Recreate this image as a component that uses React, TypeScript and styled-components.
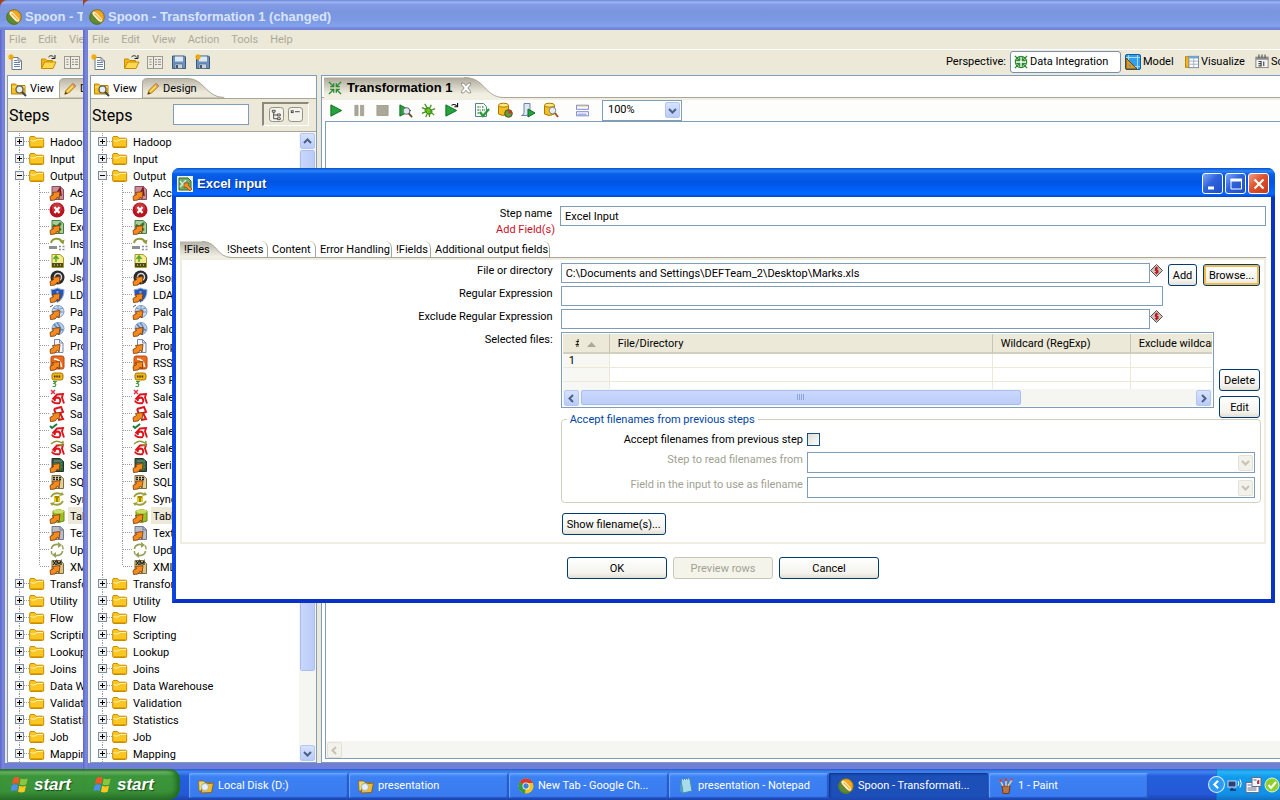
import React from "react";
import styled, { createGlobalStyle, css } from "styled-components";

const UI = `Roboto, "Open Sans", "Liberation Sans", sans-serif`;
const TITLE = `"Liberation Sans", Roboto, sans-serif`;
const BEIGE = "#ece9d8";
const LINE = "#7f9db9";
const MUTED = "#aca899";

const Global = createGlobalStyle`
  *, *::before, *::after { box-sizing: border-box; }
  body { margin: 0; background: #a3421f; color: #000; font: 11px/14px ${UI}; }
  button, input, select { font: inherit; color: inherit; margin: 0; }
  svg { display: block; flex: none; }
`;

/* ---------- Page and window frame ---------- */

const Screen = styled.div`
  display: grid;
  grid-template-columns: 83px minmax(0, 1fr);
  min-height: 100vh;
`;

const Desktop = styled.section`
  position: relative;
  display: flex;
  flex-direction: column;
  min-width: 0;
  overflow: hidden;
`;

const Frame = styled.div`
  flex: 1;
  display: flex;
  flex-direction: column;
  padding: 0 0 6px 5px;
  border-radius: 8px 0 0 0;
  background: linear-gradient(90deg, #5a66cf 0, #7b88dc 3px, #6f7ed6 5px);
`;

const TitleBar = styled.header`
  height: 30px;
  margin-left: -5px;
  padding: 4px 0 0 6px;
  display: flex;
  align-items: center;
  gap: 3px;
  border-radius: 8px 0 0 0;
  background: linear-gradient(#6a83d8 0, #9db5f2 2px, #8199e2 5px, #7a96df 12px, #7c98e2 20px, #82a3ee 26px, #7489d8 28px, #6f7ed6 30px);
  color: #d8e4fb;
  white-space: nowrap;
`;

const TitleText = styled.h1`
  margin: 0;
  min-width: 0;
  overflow: hidden;
  font: bold 13px/16px ${TITLE};
`;

const Chrome = styled.div`
  flex: 1;
  display: flex;
  flex-direction: column;
  background: ${BEIGE};
`;

const MenuBar = styled.nav`
  height: 20px;
  padding: 2px 4px;
  display: flex;
  gap: 12px;
  border-bottom: 1px solid #fff;
  color: ${MUTED};
  white-space: nowrap;
`;

const MenuItem = styled.button`
  padding: 0;
  border: 0;
  background: none;
  line-height: 15px;
`;

const ToolRow = styled.div`
  height: 25px;
  padding: 0 0 2px 3px;
  display: flex;
  align-items: center;
  overflow: hidden;
`;

const IconButton = styled.button<{ $w?: number }>`
  flex: none;
  width: ${(p) => p.$w ?? 24}px;
  height: 22px;
  padding: 0;
  border: 0;
  background: none;
  display: grid;
  place-items: center start;
`;

const Perspectives = styled.div`
  flex: none;
  width: 334px;
  height: 23px;
  margin-left: auto;
  display: flex;
  align-items: center;
  overflow: hidden;
  white-space: nowrap;
`;

const PerspectiveLabel = styled.span`
  flex: none;
  width: 64px;
`;

const Perspective = styled.button<{ $on?: boolean; $w: number }>`
  flex: none;
  width: ${(p) => p.$w}px;
  height: 22px;
  padding: 0 3px;
  display: flex;
  align-items: center;
  gap: 2px;
  border: 1px solid ${(p) => (p.$on ? "#7a8fae" : "transparent")};
  border-radius: 3px;
  background: ${(p) => (p.$on ? "#fff" : "none")};
`;

const Panes = styled.div`
  flex: 1;
  display: flex;
  gap: 4px;
  padding-left: 2px;
`;

/* ---------- Steps pane ---------- */

const StepsPane = styled.div`
  flex: none;
  width: 227px;
  display: flex;
  flex-direction: column;
  border: 1px solid ${LINE};
`;

const TabStrip = styled.div`
  height: 23px;
  padding-left: 3px;
  display: flex;
  align-items: end;
  background: #fff;
  border-bottom: 1px solid #aaa697;
`;

const PaneTab = styled.button<{ $w: number }>`
  position: relative;
  flex: none;
  width: ${(p) => p.$w}px;
  height: 20px;
  padding: 2px 0 0;
  display: flex;
  align-items: center;
  gap: 3px;
  border: 0;
  background: none;

  & > * { position: relative; }
`;

const TabShape = styled.svg`
  && { position: absolute; inset: 0 auto auto 0; }
`;

const StepsBar = styled.div`
  height: 33px;
  padding: 3px 7px 4px 1px;
  display: flex;
  align-items: center;
  border-bottom: 1px solid #aaa697;
`;

const StepsTitle = styled.h2`
  margin: 0;
  padding-top: 2px;
  width: 81px;
  font: 16px/20px ${UI};
`;

const SearchBox = styled.input`
  width: 76px;
  height: 21px;
  border: 1px solid ${LINE};
  background: #fff;
`;

const ModeGroup = styled.div`
  margin: 0 0 2px 13px;
  width: 47px;
  height: 24px;
  display: flex;
  align-items: center;
  justify-content: space-evenly;
  border: 1px solid #fff;
  border-top: 2px solid #8c897c;
  border-left: 2px solid #8c897c;
`;

const TreeArea = styled.div`
  flex: 1;
  display: flex;
  justify-content: space-between;
  background: #fff;
`;

const Tree = styled.ul`
  margin: 0;
  padding: 1px 0 0 1px;
  list-style: none;
  white-space: nowrap;
`;

const TreeRow = styled.li`
  height: 17px;
  display: flex;
  align-items: center;
`;

const TreeText = styled.span<{ $hot?: boolean }>`
  margin-left: 3px;
  padding: 2px 2px 0;
  line-height: 15px;
  background: ${(p) => (p.$hot ? BEIGE : "none")};
`;

const Toggle = styled.button`
  padding: 0;
  border: 0;
  background: none;
`;

/* ---------- Scroll bars ---------- */

const VTrack = styled.div`
  flex: none;
  width: 17px;
  padding: 1px;
  display: flex;
  flex-direction: column;
  gap: 1px;
  background: #f5f5f1;
`;

const VThumb = styled.div`
  height: 83%;
  border: 1px solid #fff;
  outline: 1px solid #a9bdf0;
  outline-offset: -1px;
  border-radius: 2px;
  background: linear-gradient(90deg, #c9d7fc, #b9cbf8);
`;

const HTrack = styled.div`
  height: 17px;
  padding: 1px;
  display: flex;
  gap: 2px;
  background: #f5f5f1;
`;

const HThumb = styled.div`
  width: 68%;
  display: grid;
  place-items: center;
  border: 1px solid #a9bdf0;
  border-radius: 2px;
  background: linear-gradient(#cad8fd, #bccdfa);
`;

const arrowBox = css<{ $off?: boolean }>`
  flex: none;
  width: 15px;
  height: 16px;
  padding: 0;
  display: grid;
  place-items: center;
  border: 1px solid ${(p) => (p.$off ? "#e4e2d8" : "#b5c6f0")};
  border-radius: 2px;
  background: ${(p) => (p.$off ? "#f2f1ea" : "linear-gradient(#d6e2fe, #b9cbf8)")};
  color: ${(p) => (p.$off ? "#c5c3b6" : "#4d6185")};
`;
const ArrowButton = styled.button<{ $off?: boolean; $end?: boolean }>`
  ${arrowBox}
  ${(p) => p.$end && "margin-left: auto;"}
`;
const ArrowEndV = styled(ArrowButton)`
  margin-top: auto;
`;
const ArrowMark = styled.span<{ $off?: boolean }>`
  ${arrowBox}
`;

/* ---------- Editor pane ---------- */

const EditorPane = styled.main`
  flex: 1;
  min-width: 0;
  display: flex;
  flex-direction: column;
  border: 1px solid ${LINE};
  border-right: 0;
  background: #fff;
`;

const EditorTabs = styled.div`
  height: 22px;
  padding: 1px 0 0 2px;
  background: #fff;
  border-bottom: 1px solid #aaa697;
`;

const EditorTab = styled.div`
  position: relative;
  width: 182px;
  height: 21px;
  padding-left: 4px;
  display: flex;
  align-items: center;
  gap: 5px;
  font: bold 13px/16px ${TITLE};

  & > * { position: relative; }
`;

const CloseButton = styled.button`
  padding: 0;
  margin-left: 3px;
  border: 0;
  background: none;
`;

const EditorTools = styled.div`
  height: 23px;
  padding: 0 0 1px 7px;
  display: flex;
  align-items: center;
  border-top: 2px solid #f1efe2;
  background: #fdfdfb;
`;

const ToolGap = styled.span<{ $w: number }>`
  flex: none;
  width: ${(p) => p.$w}px;
`;

const Canvas = styled.div`
  flex: 1;
  margin: 0 0 3px 3px;
  display: flex;
  flex-direction: column;
  justify-content: end;
  border: 1px solid ${LINE};
  border-right: 0;
`;

/* ---------- Form parts ---------- */

const SelectBox = styled.span<{ $w?: string }>`
  width: ${(p) => p.$w ?? "100%"};
  height: 21px;
  padding: 1px;
  display: flex;
  align-items: center;
  border: 1px solid ${LINE};
  background: #fff;
`;

const PlainSelect = styled.select`
  flex: 1;
  min-width: 0;
  padding: 0 4px;
  border: 0;
  appearance: none;
  background: none;
`;

const TextBox = styled.input`
  flex: 1;
  min-width: 0;
  height: 20px;
  padding: 1px 4px 0;
  border: 1px solid ${LINE};
  background: #fff;
`;

const Button = styled.button<{ $w: number; $focus?: boolean }>`
  flex: none;
  width: ${(p) => p.$w}px;
  height: 22px;
  padding: 2px 0 0;
  border: 1px solid #003c74;
  border-radius: 3px;
  background: linear-gradient(#fff, #f4f3ee 75%, #e3dfd3);
  white-space: nowrap;
  ${(p) => p.$focus && "box-shadow: inset 0 0 0 2px #f3b949;"}

  &:disabled {
    border-color: #c9c7ba;
    background: #f5f4ea;
    color: #a1a192;
  }
`;

/* ---------- Dialog ---------- */

const Dialog = styled.div`
  position: absolute;
  top: 168px;
  left: 89px;
  right: 5px;
  border: 4px solid #0831c8;
  border-top: 0;
  border-left-color: #0b45dd;
  border-radius: 8px 8px 0 0;
  background: #fff;
`;

const DialogTitle = styled.header`
  height: 29px;
  margin: 0 -4px;
  padding: 2px 6px 0 5px;
  display: flex;
  align-items: center;
  gap: 2px;
  border-radius: 7px 7px 0 0;
  background: linear-gradient(#0a4fd0 0, #2b85f8 3px, #0a5fe8 6px, #0054e3 14px, #0062fb 22px, #0467ff 26px, #0045c8 29px);
  color: #fff;
`;

const DialogHeading = styled(TitleText)`
  flex: 1;
  margin-left: 2px;
  text-shadow: 1px 1px 0 #0a2f87;
`;

const CaptionButton = styled.button<{ $close?: boolean }>`
  width: 21px;
  height: 21px;
  padding: 0;
  display: grid;
  place-items: center;
  border: 1px solid #fff;
  border-radius: 3px;
  background: ${(p) =>
    p.$close
      ? "linear-gradient(135deg, #f0a088, #e0502c 45%, #c63a17)"
      : "linear-gradient(135deg, #7fa6f5, #2f62dd 45%, #1f4fc6)"};
`;

const DialogBody = styled.form`
  padding: 9px 5px 20px 4px;
`;

const Field = styled.div<{ $min?: number }>`
  display: grid;
  grid-template-columns: 35% minmax(0, 1fr);
  align-items: start;
  min-height: ${(p) => p.$min ?? 23}px;
`;

const Caption = styled.label<{ $off?: boolean; $near?: boolean; $head?: boolean }>`
  padding: ${(p) => (p.$head ? 0 : 1)}px ${(p) => (p.$near ? 4 : 8)}px 0 0;
  text-align: right;
  color: ${(p) => (p.$off ? "#a1a192" : "inherit")};
`;

const HeadCaptions = styled.div`
  display: flex;
  flex-direction: column;
  line-height: 16px;
`;

const AddField = styled.span`
  padding-right: 5px;
  text-align: right;
  color: #c8102a;
`;

const Tabs = styled.div`
  margin-top: 3px;
  height: 17px;
  display: flex;
  border-bottom: 1px solid #aaa697;
`;

const ActiveTab = styled.button`
  position: relative;
  width: 43px;
  padding: 2px 0 0 4px;
  border: 0;
  background: none;
  text-align: left;

  & > * { position: relative; }
`;

const Tab = styled.button<{ $w: number }>`
  width: ${(p) => p.$w}px;
  padding: 2px 0 0 4px;
  border: 0;
  border-right: 1px solid #aaa697;
  border-top-right-radius: 7px;
  background: none;
  text-align: left;
  white-space: nowrap;
`;

const TabPage = styled.div`
  padding: 3px 0 7px;
  border: 2px solid #efede1;
`;

const Controls = styled.div<{ $right?: number }>`
  display: flex;
  align-items: start;
  padding-right: ${(p) => p.$right ?? 4}px;
`;

const ButtonSlot = styled.div`
  display: flex;
  gap: 6px;
  padding: 1px 0 0 5px;
`;

const VarIcon = styled.svg`
  margin-top: 1px;
`;

const GridBox = styled.div`
  flex: 1;
  min-width: 0;
  height: 76px;
  padding: 1px;
  display: flex;
  flex-direction: column;
  border: 1px solid ${LINE};
`;

const GridView = styled.div`
  flex: 1;
  min-height: 0;
  overflow: hidden;
`;

const FileTable = styled.table`
  width: 780px;
  table-layout: fixed;
  border-collapse: separate;
  border-spacing: 0;

  th {
    height: 20px;
    padding: 2px 8px 0;
    background: ${BEIGE};
    border-bottom: 2px solid #d3cfbd;
    border-right: 1px solid #c9c5b3;
    font-weight: normal;
    text-align: left;
  }
  td {
    height: 14px;
    padding: 0 6px;
    line-height: 13px;
    border-right: 1px solid ${BEIGE};
    border-bottom: 1px solid ${BEIGE};
  }
  td:first-child { background: #f7f7f4; }
`;

const SortHead = styled.div`
  display: flex;
  align-items: center;
  gap: 8px;
  padding-left: 4px;
`;

const Hash = styled.span`
  width: 4px;
  overflow: hidden;
`;

const SideButtons = styled.div`
  padding: 37px 0 0 5px;
  display: flex;
  flex-direction: column;
  gap: 5px;
`;

const Group = styled.fieldset`
  margin: -6px 3px 0 0;
  padding: 7px 5px 4px 4px;
  min-width: 0;
  border: 1px solid #d0d0bf;
  border-radius: 4px;
`;

const Legend = styled.legend`
  margin-left: 1px;
  padding: 1px 3px 0;
  line-height: 13px;
  color: #0046a5;
`;

const CheckBox = styled.input`
  width: 13px;
  height: 13px;
  appearance: none;
  border: 1px solid #1c5180;
  background: linear-gradient(135deg, #dcdcd7, #fff);
`;

const ShowRow = styled.div`
  padding: 10px 0 0 1px;
`;

const DialogButtons = styled.div`
  padding-top: 13px;
  display: flex;
  justify-content: center;
  gap: 6px;
`;

/* ---------- Task bar ---------- */

const TaskBar = styled.footer`
  height: 31px;
  display: flex;
  align-items: stretch;
  background: linear-gradient(#2a5bd0 0, #3f87f2 3px, #245edb 7px, #2459d8 25px, #1c44ac 31px);
  color: #fff;
`;

const StartButton = styled.button`
  flex: none;
  width: 97px;
  padding: 0 0 0 10px;
  display: flex;
  align-items: center;
  gap: 4px;
  border: 0;
  border-radius: 0 10px 12px 0;
  background: linear-gradient(#2c6e2c 0, #6cb668 3px, #3b963a 7px, #3a9238 22px, #2a6f29 31px);
  box-shadow: inset -4px 0 5px #1f6a24;
  color: #fff;
  font: italic bold 17px/20px ${TITLE};
  text-shadow: 1px 1px 1px #1d4a1d;
`;

const TaskList = styled.div`
  flex: 1;
  min-width: 0;
  padding: 4px 0 2px 9px;
  display: flex;
  gap: 1px;
`;

const Task = styled.button<{ $on?: boolean }>`
  flex: 0 1 159px;
  min-width: 0;
  padding: 0 8px 0 9px;
  display: flex;
  align-items: center;
  gap: 4px;
  border: 0;
  border-radius: 2px;
  background: ${(p) => (p.$on ? "#1c4fb8" : "linear-gradient(#5a9bff 0, #3c81f3 4px, #3a7bf0)")};
  box-shadow: ${(p) => (p.$on ? "inset 1px 1px 2px #0f327f" : "inset 1px 1px 1px #6ea8fb, inset -1px -1px 1px #2457c4")};
  white-space: nowrap;
`;

const Tray = styled.div`
  flex: none;
  width: 72px;
  display: flex;
  align-items: center;
  gap: 2px;
  overflow: hidden;
  background: linear-gradient(90deg, transparent 8px, #0f55b8 8px, transparent 9px),
    linear-gradient(#1589de 0, #28b3f5 3px, #129aee 8px, #1290e8 25px, #1072c4 31px) 8px 0 no-repeat;
`;

/* ---------- Icons ---------- */

type SvgProps = { children: React.ReactNode; w?: number; h?: number; box?: string };
const Svg = ({ children, w = 16, h = 16, box }: SvgProps) => (
  <svg width={w} height={h} viewBox={box ?? "0 0 16 16"} fill="none" aria-hidden="true">
    {children}
  </svg>
);

const SpoonLogo = () => (
  <Svg>
    <circle cx="8" cy="8" r="7.5" fill="#f4a31c" />
    <path d="M2.5 3A7.5 7.5 0 0 0 12 14.5L3.5 3Z" fill="#5d8a32" />
    <path d="M4.500 1.500Q13 2 14.500 11Q15 13 12.500 12.500Q4 9 3.500 3Z" fill="#f7a81f" />
    <path d="M3.500 3.500Q5 1.500 8 4.500L12.500 9.500Q14 12 12 12.500Q10.500 13 8.500 11L4.500 6.500Q3 5 3.500 3.500Z" fill="#fff3d0" />
    <path d="M5.500 4.500 12 11" stroke="#f0b244" strokeWidth="1.200" />
    <circle cx="8" cy="8" r="7.300" stroke="#4d6a2d" strokeWidth=".8" />
  </Svg>
);

const Spark = () => <path d="M0 3h6M3 0v6M1 1l4 4M5 1 1 5" stroke="#f2a900" strokeWidth="1.200" />;

const NewFile = () => (
  <Svg>
    <path d="M4 3.500h6l3.500 3.500v8.500H4Z" fill="#fff" stroke="#6b7689" />
    <path d="M10 3.500V7h3.500" stroke="#6b7689" />
    <path d="M6 8.500h6M6 10.500h6M6 12.500h6M6 6.500h3" stroke="#6a83ad" />
    <Spark />
  </Svg>
);
const OpenFolder = () => (
  <Svg w={17}>
    <path d="M1 14V5h4l1.500 1.500H12V8" fill="#f3b61d" stroke="#c88a00" />
    <path d="M1 14.500 4 8h11.500l-3 6.500Z" fill="#ffd84d" stroke="#c88a00" />
    <path d="M8 3c2-2 4-1.500 5.500.5M14.500 1v3.500H11" stroke="#222" />
  </Svg>
);
const ListIcon = () => (
  <Svg>
    <rect x=".5" y="2.500" width="15" height="12" fill="#eeece2" stroke="#9c9a8e" />
    <path d="M6.500 2.500v12M2.500 5.500h2M2.500 8h2M2.500 10.500h2M8 5.500h2m1 0h3M8 8h2m1 0h3M8 10.500h2m1 0h3" stroke="#8f8d82" />
  </Svg>
);
const Floppy = ({ star }: { star?: boolean }) => (
  <Svg>
    <path d="M1.500 2h12l1 1v11.500h-13Z" fill="#6d93bd" stroke="#3b587c" />
    <rect x="4" y="2.500" width="8" height="5" fill="#dfe9f3" />
    <rect x="4" y="10" width="7.500" height="4.500" fill="#c8d2dc" stroke="#4a627f" strokeWidth=".6" />
    <rect x="5" y="11" width="2" height="3" fill="#3b587c" />
    {star && <Spark />}
  </Svg>
);
const Folder = () => (
  <Svg>
    <path d="M.7 12V3.700Q.7 2.500 2 2.500h3.500L7 4.200h6.500q1.200 0 1.200 1.200V12q0 1.500-1.300 1.500H2Q.7 13.500.7 12Z" fill="#f9c623" stroke="#c68d00" />
    <path d="M1.500 6.500Q6 8 8 5.500h6" stroke="#fff0a8" strokeWidth="1.200" />
    <path d="M1.500 12.500h12" stroke="#e0a100" />
  </Svg>
);
const ViewIcon = () => (
  <Svg>
    <path d="M.5 13V3h4l1.500 1.500h8V13Z" fill="#f6bf25" stroke="#b98300" />
    <path d="M1 6h13" stroke="#ffe58a" />
    <circle cx="8.500" cy="8.500" r="3.500" fill="#e3eef8" stroke="#555" strokeWidth="1.200" />
    <path d="m11 11 4 4" stroke="#444" strokeWidth="2" />
  </Svg>
);
const Pencil = () => (
  <Svg w={14} h={14}>
    <path d="M2 14 3.500 9.500 11.500 1.500l3 3L6.500 12.500Z" fill="#f7c433" stroke="#a8690b" />
    <path d="m10 3 3 3 1.500-1.500-3-3Z" fill="#d98a7a" />
    <path d="M2 14 3 11l2 2Z" fill="#333" />
    <path d="m5 11 6.500-6.500" stroke="#fff2b0" />
  </Svg>
);
const ModeTree = () => (
  <Svg w={15} h={15}>
    <rect x=".5" y=".5" width="15" height="15" rx="3" fill="#f4f3ec" stroke="#8b897e" />
    <path d="M5 5v7.500h4M5 8.500h4" stroke="#444" />
    <path d="M3.500 3.500h3v2h-3ZM9 7.500h3v2H9ZM9 11.500h3v2H9Z" fill="#fff" stroke="#444" />
  </Svg>
);
const ModeFlat = () => (
  <Svg w={15} h={15}>
    <rect x=".5" y=".5" width="15" height="15" rx="3" fill="#f4f3ec" stroke="#8b897e" />
    <rect x="3.500" y="4" width="2" height="2" stroke="#444" />
    <path d="M7.500 5h5" stroke="#444" />
  </Svg>
);

type GuideKind = "plus" | "minus" | "line" | "branch" | "end";
const Guide = ({ kind }: { kind: GuideKind }) => {
  const dots = { stroke: "#9a9a9a", strokeDasharray: "1 1" };
  const box = kind === "plus" || kind === "minus";
  return (
    <Svg w={20} h={17} box="0 0 20 17">
      <path d={kind === "end" ? "M10.500 0v8" : "M10.500 0v17"} {...dots} />
      {kind !== "line" && <path d="M11 8.500h9" {...dots} />}
      {box && (
        <>
          <rect x="6.500" y="4.500" width="8" height="8" fill="#f1efe9" stroke="#7b8ba3" />
          <path d={kind === "plus" ? "M8 8.500h5M10.500 6v5" : "M8 8.500h5"} stroke="#000" />
        </>
      )}
    </Svg>
  );
};

const OrangeArrow = () => (
  <path d="M1.500 15.500 1 11.500l3.500-2L3.500 7.500 11 6.500l-1 7.500L8.500 12 6 15Z" fill="#f28a1e" stroke="#7b3305" strokeWidth=".8" />
);
const DocShape = ({ fill, edge }: { fill: string; edge: string }) => (
  <path d="M3 1.500h8l3.500 3v10H3Z" fill={fill} stroke={edge} />
);
const ForceMark = () => (
  <path d="M3.500 10.500 8 5.500l6-.5-1 3.500L15 14.500M6 12q-1-3 3-3.500 3 1 2 5M3 11.500Q4 15 11 14" stroke="#dc141c" strokeWidth="1.900" />
);

const stepArt: Record<string, React.ReactNode> = {
  access: <><DocShape fill="#c98f97" edge="#8b4d55" /><path d="m6 12 5-9 1 8M7 9l5-2" stroke="#7b1428" strokeWidth="1.500" /><OrangeArrow /></>,
  remove: <><circle cx="8" cy="8" r="7.500" fill="#b81420" /><circle cx="8" cy="6" r="5" fill="#d64b50" opacity=".6" /><path d="m5.500 5 5 6m0-6-5 6" stroke="#fff" strokeWidth="2.200" /></>,
  excel: <><DocShape fill="#a8cf9b" edge="#4a7a42" /><path d="m4 6 8 5M12 4 5 11" stroke="#2c7a35" strokeWidth="2.500" /><OrangeArrow /></>,
  insert: <><path d="M2 7c1-5 9-6 11-1" stroke="#8f9b3a" strokeWidth="2" /><path d="m10.500 5.500 5-2-1 5Z" fill="#8f9b3a" /><rect x="0" y="10" width="8" height="3" fill="#8b8f94" /><path d="M10 10.500h2m1.500 0h2M10 13.500h2m1.500 0h2" stroke="#8b8f94" strokeWidth="1.500" /></>,
  jms: <><DocShape fill="#f2ec8c" edge="#a59a2a" /><path d="M7 9V4M4.500 6 7 3l2.500 3" stroke="#5aa32a" strokeWidth="1.500" /><path d="M3 10h11v4H3Z" fill="#4b4a20" /><path d="M5 12h1m2 0h1m2 0h1" stroke="#fff27a" /></>,
  json: <><circle cx="8.500" cy="7.500" r="7" fill="#2b2b2b" /><circle cx="9" cy="7" r="3.500" stroke="#ddd" strokeWidth="1.500" /><OrangeArrow /></>,
  ldap: <><path d="M2 2.500q4 0 6.500-1.500Q11 2.500 15 2.500q.5 9-6.500 13Q2 12 2 2.500Z" fill="#2458b8" stroke="#9fb4d0" /><path d="M8.500 4v8" stroke="#7ea6ea" strokeWidth="2" /><OrangeArrow /></>,
  palo: <><circle cx="9" cy="7.500" r="6" fill="#c9dcf2" stroke="#7f9cc4" /><path d="M4 4q5 3 10 0M9 2v11M3.500 8h11" stroke="#6f91c4" /><path d="M1 3 4 1" stroke="#556" /><OrangeArrow /></>,
  dim: <><circle cx="9" cy="7.500" r="6" fill="#b8d0ea" stroke="#7f9cc4" /><path d="M8 2q6 5 2 11M5 3q3 5 9 6" stroke="#5e86bd" strokeWidth="1.500" /><OrangeArrow /></>,
  props: <><path d="M5.500 1.500h5L14 5v9.500H5.500Z" fill="#f2f5fb" stroke="#7887a8" /><path d="M10.500 1.500V5H14" stroke="#7887a8" /><OrangeArrow /></>,
  rss: <><rect x="2" y="1" width="13" height="13" rx="2" fill="#ea6a1e" stroke="#b64a0a" /><path d="M5 4q7 0 7.500 8M5 7.500q4 0 4.500 4.500" stroke="#fff" strokeWidth="1.600" /><OrangeArrow /></>,
  s3: <><rect x="3" y="1" width="11" height="7" rx="2" fill="#f0b51c" stroke="#a97800" /><path d="M5 4.500h7" stroke="#4a3a00" strokeWidth="2" strokeDasharray="1.500 .8" /><path d="M4 9.500h3l-2 2q3 0 1 3H3.500" stroke="#3b9a3a" strokeWidth="1.200" /></>,
  sfDelete: <><ForceMark /><path d="m2 1 4 4m0-4L2 5" stroke="#d8344c" strokeWidth="1.500" /></>,
  sfInsert: <><path d="M5 3 12 1l2 5-3 1 3 6-5 1M5 3l2 5 4-1" stroke="#dc141c" strokeWidth="2" /><OrangeArrow /></>,
  sfUpdate: <><ForceMark /><path d="m1 3 2 2 5-4" stroke="#1c7a3a" strokeWidth="2" /></>,
  sfUpsert: <><ForceMark /><path d="M2 4q5-5 11-1l1-2v4h-4" stroke="#8f9b3a" strokeWidth="1.300" /></>,
  serialize: <><DocShape fill="#3b5a45" edge="#20352a" /><path d="M5 4h8M5 7h8M5 10h8" stroke="#7f9a86" /><path d="M11.500 3v10" stroke="#1c8f35" /><OrangeArrow /></>,
  sql: <><DocShape fill="#ddcf9f" edge="#7d6c3c" /><path d="M4 3.500h9M4 5.500h9" stroke="#222" strokeWidth="1.400" strokeDasharray="2 1" /><OrangeArrow /></>,
  sync: <><path d="M2 6Q5 .5 12 3M14 10Q11 15.500 4 13" stroke="#9aa03c" strokeWidth="1.800" /><path d="m10 5 5-1-2-3ZM6 11l-5 1 2 3Z" fill="#9aa03c" /><path d="M5 5h6v6H5Z" fill="#e8c822" /><path d="M6 5h4v2H9v4H7V7H6Z" fill="#a88600" /></>,
  table: <><path d="M4 3v10q5 3 11 0V3q-5-3-11 0Z" fill="#9dc026" stroke="#688a12" /><ellipse cx="9.500" cy="3.200" rx="5.300" ry="2" fill="#c9de63" /><OrangeArrow /></>,
  text: <><DocShape fill="#b9bdc9" edge="#747a8c" /><path d="M11 1.500v3.500h3.500" stroke="#747a8c" /><OrangeArrow /></>,
  update: <><path d="M2.500 7Q3 2 10 2.500M13.500 9Q13 14 6 13.500" stroke="#9aa05a" strokeWidth="1.800" /><path d="m9 0 4 3-4 3ZM7 10l-4 3 4 3Z" fill="#9aa05a" /><path d="M13 3.500q1.500 2 1 4M2.500 9Q2 11 3.500 12.500" stroke="#9aa05a" strokeWidth="1.500" /></>,
  xml: <><DocShape fill="#d6c68e" edge="#7d6c3c" /><path d="m4 2 3 4m0-4L4 6m4 0V2l2 3 2-3v4" stroke="#222" strokeWidth="1.200" /><OrangeArrow /></>,
};

const Play = ({ children }: { children?: React.ReactNode }) => (
  <Svg w={15} h={15}><path d="M2 2 13.500 8 2 14Z" fill="#25a43c" stroke="#0d6a1f" />{children}</Svg>
);
const Pause = () => <Svg w={15} h={15}><path d="M3 2.500h3.500v11H3ZM9 2.500h3.500v11H9Z" fill="#aca899" stroke="#8f8c7e" strokeWidth=".6" /></Svg>;
const Stop = () => <Svg w={15} h={15}><rect x="2" y="2.500" width="12" height="11" fill="#aca899" stroke="#8f8c7e" strokeWidth=".6" /></Svg>;
const Magnify = () => (
  <g><circle cx="9" cy="8.500" r="3.500" fill="#dfe8ef" stroke="#777" strokeWidth="1.200" /><path d="m11.500 11 3.500 4" stroke="#6b4a34" strokeWidth="2" /></g>
);
const Bug = () => (
  <Svg w={15} h={15}>
    <ellipse cx="8" cy="8.500" rx="3" ry="4" transform="rotate(-45 8 8.500)" fill="#6cc024" stroke="#2f7d12" />
    <path d="M1 5l5 2M4 1l3 5M11 2 9 6M15 6l-5 2M1 11l5-2M5 15l2-4M14 13l-4-4M9 15v-4" stroke="#3f8f18" strokeWidth="1.300" />
  </Svg>
);
const Verify = () => (
  <Svg>
    <path d="M1.500 1.500h8l3 3v10h-11Z" fill="#f5faf5" stroke="#5b7f96" />
    <path d="M3.500 5h3M3.500 8h3M3.500 11h3M8 5h2M8 8h3" stroke="#3b8a4a" strokeWidth="1.400" strokeDasharray="1.400 .8" />
    <path d="m6 10 3 4 6-7" stroke="#239a35" strokeWidth="2.200" />
  </Svg>
);
const Cylinder = () => (
  <g><path d="M1.500 3v9q4.500 3 10 0V3" fill="#f3c020" stroke="#a87a00" /><ellipse cx="6.500" cy="3.200" rx="5" ry="2" fill="#ffe680" stroke="#a87a00" /></g>
);
const Impact = () => <Svg><Cylinder /><circle cx="11.500" cy="11.500" r="3.800" fill="#6a9a3b" stroke="#3c5a1f" /><path d="M11.500 11.500V7.700a3.800 3.800 0 0 1 3.800 3.800Z" fill="#c23a2a" /></Svg>;
const SqlRun = () => (
  <Svg><path d="M4 1.500h6v9q-1 3-4 3H1.500q2.500-.5 2.500-3Z" fill="#dde6f3" stroke="#6e84a8" /><path d="m8 7 7 4-7 4Z" fill="#25a43c" stroke="#0d6a1f" /></Svg>
);
const Explore = () => <Svg><Cylinder /><circle cx="9.500" cy="8.500" r="3.300" fill="#e6edf4" stroke="#8a8a8a" /><path d="m12 11 3 4" stroke="#9a5a28" strokeWidth="2" /></Svg>;
const Results = () => (
  <Svg w={13} h={13}><path d="M.5 1.500h15v5H.5ZM.5 9.500h15v5H.5Z" fill="#fff" stroke="#5a6bd0" /><path d="M1 2.500h14" stroke="#e0b83c" /><path d="M2 12.500h11" stroke="#5a6bd0" /></Svg>
);
const TransIcon = ({ ring }: { ring?: boolean }) => (
  <Svg w={14} h={14}>
    {ring && <circle cx="8" cy="8" r="6.500" stroke="#2d8a2f" strokeWidth="1.300" />}
    <path d="m1 1 5 5m9-5-5 5M1 15l5-5m9 5-5-5" stroke="#2d8a2f" strokeWidth="1.600" />
    <path d="M6.500 2.500v4h-4M9.500 2.500v4h4M6.500 13.500v-4h-4M9.500 13.500v-4h4" stroke="#2d8a2f" strokeWidth="1.500" />
  </Svg>
);
const ModelIcon = () => (
  <Svg><rect x=".5" y=".5" width="15" height="15" rx="1.500" fill="#2ea0ee" stroke="#0f5f9f" /><path d="M3.500 1v14M12.500 1v14M1 3.500h14M1 12.500h14" stroke="#a8dcff" /><path d="M1 4v11h11Z" fill="#d99a2b" stroke="#6b4300" /><path d="M4 10v2.500h2.500Z" fill="#2ea0ee" /></Svg>
);
const VisualizeIcon = () => (
  <Svg w={14} h={14}><rect x=".5" y="2" width="5" height="12" fill="#f3b61d" stroke="#b27b00" /><rect x="4.500" y="1.500" width="11" height="13" fill="#fff" stroke="#6f7f9a" /><path d="M5 3h10" stroke="#5fa8e8" strokeWidth="2" /><path d="M5 7h10M5 10.500h10M10 4v10" stroke="#9aa8bd" /></Svg>
);
const CalendarIcon = () => (
  <Svg w={14} h={15}><rect x="1" y="3" width="14" height="12" fill="#f4f4f4" stroke="#7a7a7a" /><path d="M1 4.500h14" stroke="#8a8a8a" strokeWidth="3" /><path d="M4.500 0v4M8 0v4M11.500 0v4" stroke="#555" strokeWidth="1.300" /><path d="M4 8h3v5H4M4 10.500h3M10 8v5" stroke="#444" strokeWidth="1.300" /></Svg>
);
const ExcelStepIcon = () => (
  <Svg><rect width="16" height="16" fill="#eef2e4" /><path d="M2 2h9l3 3v9H2Z" fill="#6fae6a" stroke="#356b35" /><path d="m3 11 6-7m-6 1 5 6" stroke="#d5ecd0" strokeWidth="1.500" /><path d="M7 7h5l-1 2 4 4-2 2-4-4-2 1Z" fill="#f3922a" stroke="#8a4305" strokeWidth=".7" /></Svg>
);
const CrossOutline = () => (
  <Svg w={12} h={12}><path d="m2 1.500 3 0 3 3.500 3-3.500h3v2L10.500 8l3.500 4.500v2h-3L8 11l-3 3.500H2v-2L5.500 8 2 3.500Z" fill="#fff" stroke="#77746a" /></Svg>
);

const paths = { up: "M1 6 4.500 2.500 8 6", down: "M1 3 4.500 6.500 8 3", left: "M6 1 2.500 4.500 6 8", right: "M3 1 6.500 4.500 3 8" };
const Chevron = ({ dir }: { dir: keyof typeof paths }) => (
  <Svg w={9} h={9} box="0 0 9 9"><path d={paths[dir]} stroke="currentColor" strokeWidth="2" /></Svg>
);

const Variable = () => (
  <VarIcon width="13" height="13" viewBox="0 0 13 13" fill="none" aria-hidden="true">
    <path d="M6.500.5 12.500 6.500 6.500 12.500.5 6.500Z" fill="#c9c4bb" stroke="#55504a" />
    <path d="M8.300 4.200H5.500v2.200h2.300v2.300H4.800M6.500 2.800v7.400" stroke="#c01722" strokeWidth="1.300" />
  </VarIcon>
);

const WinFlag = () => (
  <Svg w={20} h={19} box="0 0 20 19">
    <path d="M3.500 3Q7 1 9.500 3L8.300 9Q5.500 7.300 2 9Z" fill="#f0582a" />
    <path d="M10.700 3.500q3 1.500 7 0L16.300 9.500q-3.500 1.500-6.800 0Z" fill="#8cc63f" />
    <path d="M1.700 10.200q3.500-1.700 6.300 0L6.800 16Q4 14.500.5 16Z" fill="#4f8df0" />
    <path d="M9.200 10.700q3.300 1.500 6.800 0l-1.400 6q-3.400 1.400-6.600 0Z" fill="#fbc81e" />
  </Svg>
);
const TaskFolder = () => (
  <Svg><path d="M.5 3h5L7 4.500h5V12l-11 1Z" fill="#f5d26a" stroke="#8f6a12" strokeWidth=".8" /><path d="m3 15 2-9 10.500-1-2 9.500Z" fill="#f1b92b" stroke="#7d5a0a" strokeWidth=".8" /><circle cx="7" cy="9" r="3.500" fill="#e6f1fc" stroke="#9fb8d6" /></Svg>
);
const ChromeIcon = () => (
  <Svg><circle cx="8" cy="8" r="7.500" fill="#f4c61f" /><path d="M8 8 1.500 4.300A7.500 7.500 0 0 1 15 5H8Z" fill="#d93a2b" /><path d="M8 8 7 15.500A7.500 7.500 0 0 1 1.500 4.300Z" fill="#3a9a42" /><circle cx="8" cy="8" r="3.500" fill="#fff" /><circle cx="8" cy="8" r="2.700" fill="#3f7de0" /></Svg>
);
const NotepadIcon = () => (
  <Svg><path d="m3 2 9-1 2 12-9 2Z" fill="#a8dcea" stroke="#3f8fa8" /><path d="m3 2-1 11 3 2Z" fill="#4fa6bf" /><path d="m4 2 7.500-1" stroke="#fff" strokeDasharray="1 1" /></Svg>
);
const PaintIcon = () => (
  <Svg><path d="M4 8h8l-1 7.500H5Z" fill="#b87446" stroke="#6a3a18" /><path d="m5 8-3-6M8 8V1M10 8l4-6" stroke="#e8cf8a" strokeWidth="1.500" /><path d="m2 1 1 3M8 0v3m5-1 1.500-1" stroke="#d8402a" strokeWidth="2" /></Svg>
);
const TrayChevron = () => (
  <Svg w={17} h={17}><circle cx="8" cy="8" r="7.500" fill="#2f9af2" stroke="#d8ecff" /><path d="M9.500 4.500 6 8l3.500 3.500" stroke="#fff" strokeWidth="2" /></Svg>
);
const NetIcon = () => (
  <Svg><rect x="1" y="4" width="8" height="6" fill="#28407a" stroke="#c9d4e8" /><path d="M3 13h6M5 11v2" stroke="#1b2c55" strokeWidth="1.600" /><path d="M11 4q1.500 2 0 5M13 2.500q2.500 4 0 8" stroke="#fff" /></Svg>
);
const CardIcon = () => (
  <Svg w={17}><rect x=".5" y="5.500" width="13" height="10" fill="#fff" stroke="#6a6f80" /><rect x="6.500" y=".5" width="9" height="9" fill="#f3f3f3" stroke="#6a6f80" /><path d="M8 3h3m1 1v3M2 8h4M2 11h9M2 13h9" stroke="#5a6a9a" /><path d="M13 3v4" stroke="#d02a2a" strokeWidth="1.500" /></Svg>
);
const ShieldIcon = () => (
  <Svg><circle cx="8" cy="8" r="7" fill="#8fce2c" stroke="#e6f7c8" /><path d="m4.500 8 2.500 3 5-6" stroke="#fff" strokeWidth="2" /></Svg>
);

/* ---------- Data ---------- */

const outputSteps: [string, string][] = [
  ["access", "Access Output"], ["remove", "Delete"], ["excel", "Excel Output"], ["insert", "Insert / Update"],
  ["jms", "JMS Producer"], ["json", "Json output"], ["ldap", "LDAP Output"], ["palo", "Palo Cells Output"],
  ["dim", "Palo Dim Output"], ["props", "Properties Output"], ["rss", "RSS Output"], ["s3", "S3 File Output"],
  ["sfDelete", "Salesforce Delete"], ["sfInsert", "Salesforce Insert"], ["sfUpdate", "Salesforce Update"],
  ["sfUpsert", "Salesforce Upsert"], ["serialize", "Serialize to file"], ["sql", "SQL File Output"],
  ["sync", "Synchronize after merge"], ["table", "Table output"], ["text", "Text file output"],
  ["update", "Update"], ["xml", "XML Output"],
];
const foldersBelow = [
  "Transform", "Utility", "Flow", "Scripting", "Lookup", "Joins", "Data Warehouse", "Validation", "Statistics", "Job", "Mapping",
];
const menus = ["File", "Edit", "View", "Action", "Tools", "Help"];

/* ---------- Sections ---------- */

const FolderRow = ({ name, open }: { name: string; open?: boolean }) => (
  <TreeRow>
    <Toggle type="button" aria-label={`${open ? "Collapse" : "Expand"} ${name}`}>
      <Guide kind={open ? "minus" : "plus"} />
    </Toggle>
    <Folder />
    <TreeText>{name}</TreeText>
  </TreeRow>
);

const StepsView = () => (
  <StepsPane>
    <TabStrip>
      <PaneTab type="button" $w={48}><ViewIcon />View</PaneTab>
      <PaneTab type="button" $w={84}>
        <TabShape width="84" height="20" viewBox="0 0 84 20" fill="none" aria-hidden="true">
          <defs>
            <linearGradient id="paneTab" x1="0" y1="0" x2="0" y2="1">
              <stop offset="0" stopColor="#b9b6a9" /><stop offset=".7" stopColor="#ece9d8" />
            </linearGradient>
          </defs>
          <path d="M.5 20V5Q.5.5 5 .5H46C62 .5 64 19.500 82 19.500V20Z" fill="url(#paneTab)" stroke="#aaa697" />
        </TabShape>
        <ToolGap $w={1} /><Pencil /><span>Design</span>
      </PaneTab>
    </TabStrip>
    <StepsBar>
      <StepsTitle>Steps</StepsTitle>
      <SearchBox type="text" aria-label="Search steps" />
      <ModeGroup><ModeTree /><ModeFlat /></ModeGroup>
    </StepsBar>
    <TreeArea>
      <Tree>
        <FolderRow name="Hadoop" />
        <FolderRow name="Input" />
        <FolderRow name="Output" open />
        {outputSteps.map(([art, name], i) => (
          <TreeRow key={name}>
            <Guide kind="line" />
            <Guide kind={i === outputSteps.length - 1 ? "end" : "branch"} />
            <Svg>{stepArt[art]}</Svg>
            <TreeText $hot={art === "table"}>{name}</TreeText>
          </TreeRow>
        ))}
        {foldersBelow.map((name) => <FolderRow key={name} name={name} />)}
      </Tree>
      <VTrack>
        <ArrowButton type="button" aria-label="Scroll up"><Chevron dir="up" /></ArrowButton>
        <VThumb />
        <ArrowEndV type="button" aria-label="Scroll down"><Chevron dir="down" /></ArrowEndV>
      </VTrack>
    </TreeArea>
  </StepsPane>
);

const Editor = () => (
  <EditorPane>
    <EditorTabs>
      <EditorTab>
        <TabShape width="182" height="21" viewBox="0 0 182 21" fill="none" aria-hidden="true">
          <defs>
            <linearGradient id="editorTab" x1="0" y1="0" x2="0" y2="1">
              <stop offset="0" stopColor="#aca899" /><stop offset=".8" stopColor="#f1efe2" />
            </linearGradient>
          </defs>
          <path d="M0 21V.5H140C162 .5 160 20.500 180 20.500V21Z" fill="url(#editorTab)" />
          <path d="M140 .5C162 .5 160 20.500 180 20.500" stroke="#aaa697" />
        </TabShape>
        <TransIcon />
        <span>Transformation 1</span>
        <CloseButton type="button" aria-label="Close tab"><CrossOutline /></CloseButton>
      </EditorTab>
    </EditorTabs>
    <EditorTools>
      <IconButton type="button" $w={23} aria-label="Run"><Play /></IconButton>
      <IconButton type="button" $w={23} aria-label="Pause"><Pause /></IconButton>
      <IconButton type="button" $w={23} aria-label="Stop"><Stop /></IconButton>
      <IconButton type="button" $w={23} aria-label="Preview"><Play><Magnify /></Play></IconButton>
      <IconButton type="button" $w={23} aria-label="Debug"><Bug /></IconButton>
      <IconButton type="button" $w={30} aria-label="Replay">
        <Play><path d="M8 2.500q3-2 5.500.5M14.500 0v4H11" stroke="#111" strokeWidth="1.200" /></Play>
      </IconButton>
      <IconButton type="button" $w={23} aria-label="Verify"><Verify /></IconButton>
      <IconButton type="button" $w={23} aria-label="Impact"><Impact /></IconButton>
      <IconButton type="button" $w={23} aria-label="Get SQL"><SqlRun /></IconButton>
      <IconButton type="button" $w={33} aria-label="Explore database"><Explore /></IconButton>
      <IconButton type="button" $w={26} aria-label="Results"><Results /></IconButton>
      <SelectBox $w="80px">
        <PlainSelect aria-label="Zoom" defaultValue="100%"><option>100%</option></PlainSelect>
        <ArrowMark><Chevron dir="down" /></ArrowMark>
      </SelectBox>
    </EditorTools>
    <Canvas>
      <HTrack>
        <ArrowButton type="button" disabled $off aria-label="Scroll left"><Chevron dir="left" /></ArrowButton>
      </HTrack>
    </Canvas>
  </EditorPane>
);

const ExcelDialog = () => (
  <Dialog role="dialog" aria-labelledby="dlg-title">
    <DialogTitle>
      <ExcelStepIcon />
      <DialogHeading as="h2" id="dlg-title">Excel input</DialogHeading>
      <CaptionButton type="button" aria-label="Minimize"><Svg><path d="M3 12h6" stroke="#fff" strokeWidth="3" /></Svg></CaptionButton>
      <CaptionButton type="button" aria-label="Maximize"><Svg><path d="M3 3.500h10.500V13H3Z" stroke="#fff" /><path d="M2.500 4h11.500" stroke="#fff" strokeWidth="3" /></Svg></CaptionButton>
      <CaptionButton type="button" $close aria-label="Close"><Svg><path d="m3.500 3.500 9 9m0-9-9 9" stroke="#fff" strokeWidth="2.200" /></Svg></CaptionButton>
    </DialogTitle>
    <DialogBody>
      <Field>
        <HeadCaptions>
          <Caption $head htmlFor="step-name">Step name</Caption>
          <AddField>Add Field(s)</AddField>
        </HeadCaptions>
        <Controls $right={0}><TextBox id="step-name" defaultValue="Excel Input" /></Controls>
      </Field>
      <Tabs role="tablist">
        <ActiveTab type="button" role="tab" aria-selected>
          <TabShape width="54" height="17" viewBox="0 0 54 17" fill="none" aria-hidden="true">
            <defs>
              <linearGradient id="formTab" x1="0" y1="0" x2="0" y2="1">
                <stop offset="0" stopColor="#b5b2a5" /><stop offset=".9" stopColor="#f1efe4" />
              </linearGradient>
            </defs>
            <path d="M0 17V.5H22C38 .5 36 16.500 52 16.500V17Z" fill="url(#formTab)" />
            <path d="M22 .5C38 .5 36 16.500 52 16.500" stroke="#aaa697" />
          </TabShape>
          <span>!Files</span>
        </ActiveTab>
        <Tab type="button" role="tab" $w={45}>!Sheets</Tab>
        <Tab type="button" role="tab" $w={48}>Content</Tab>
        <Tab type="button" role="tab" $w={76}>Error Handling</Tab>
        <Tab type="button" role="tab" $w={39}>!Fields</Tab>
        <Tab type="button" role="tab" $w={119}>Additional output fields</Tab>
      </Tabs>
      <TabPage>
        <Field>
          <Caption htmlFor="file">File or directory</Caption>
          <Controls>
            <TextBox id="file" defaultValue="C:\Documents and Settings\DEFTeam_2\Desktop\Marks.xls" />
            <Variable />
            <ButtonSlot>
              <Button type="button" $w={29}>Add</Button>
              <Button type="button" $w={57} $focus>Browse...</Button>
            </ButtonSlot>
          </Controls>
        </Field>
        <Field>
          <Caption htmlFor="regex">Regular Expression</Caption>
          <Controls $right={101}><TextBox id="regex" /></Controls>
        </Field>
        <Field>
          <Caption htmlFor="exclude">Exclude Regular Expression</Caption>
          <Controls $right={101}><TextBox id="exclude" /><Variable /></Controls>
        </Field>
        <Field>
          <Caption as="span" id="files-label">Selected files:</Caption>
          <Controls>
            <GridBox>
              <GridView>
                <FileTable aria-labelledby="files-label">
                  <colgroup><col width="47" /><col width="383" /><col width="138" /><col /></colgroup>
                  <thead>
                    <tr>
                      <th><SortHead><Hash>#</Hash><Svg w={9} h={5} box="0 0 9 5"><path d="M0 5 4.500 0 9 5Z" fill="#aca899" /></Svg></SortHead></th>
                      <th>File/Directory</th>
                      <th>Wildcard (RegExp)</th>
                      <th>Exclude wildcard</th>
                    </tr>
                  </thead>
                  <tbody>
                    <tr><td>1</td><td /><td /><td /></tr>
                    <tr><td /><td /><td /><td /></tr>
                    <tr><td /><td /><td /><td /></tr>
                  </tbody>
                </FileTable>
              </GridView>
              <HTrack>
                <ArrowButton type="button" aria-label="Scroll left"><Chevron dir="left" /></ArrowButton>
                <HThumb><Svg w={8} h={7} box="0 0 8 7"><path d="M.5 0v6m2-6v6m2-6v6m2-6v6" stroke="#8fa6dc" /></Svg></HThumb>
                <ArrowButton type="button" $end aria-label="Scroll right"><Chevron dir="right" /></ArrowButton>
              </HTrack>
            </GridBox>
            <SideButtons>
              <Button type="button" $w={41}>Delete</Button>
              <Button type="button" $w={41}>Edit</Button>
            </SideButtons>
          </Controls>
        </Field>
        <Field>
          <span />
          <div>
            <Group>
              <Legend>Accept filenames from previous steps</Legend>
              <Field $min={19}>
                <Caption $near $head htmlFor="accept">Accept filenames from previous step</Caption>
                <CheckBox id="accept" type="checkbox" />
              </Field>
              <Field $min={25}>
                <Caption $near $off htmlFor="step-from">Step to read filenames from</Caption>
                <SelectBox>
                  <PlainSelect id="step-from" disabled />
                  <ArrowMark $off><Chevron dir="down" /></ArrowMark>
                </SelectBox>
              </Field>
              <Field $min={21}>
                <Caption $near $off htmlFor="field-from">Field in the input to use as filename</Caption>
                <SelectBox>
                  <PlainSelect id="field-from" disabled />
                  <ArrowMark $off><Chevron dir="down" /></ArrowMark>
                </SelectBox>
              </Field>
            </Group>
            <ShowRow><Button type="button" $w={104}>Show filename(s)...</Button></ShowRow>
          </div>
        </Field>
      </TabPage>
      <DialogButtons>
        <Button type="button" $w={100}>OK</Button>
        <Button type="button" $w={100} disabled>Preview rows</Button>
        <Button type="button" $w={100}>Cancel</Button>
      </DialogButtons>
    </DialogBody>
  </Dialog>
);

const SpoonDesktop = ({ full }: { full?: boolean }) => (
  <Desktop>
    <Frame>
      <TitleBar>
        <SpoonLogo />
        <TitleText>Spoon - Transformation 1 (changed)</TitleText>
      </TitleBar>
      <Chrome>
        <MenuBar>
          {(full ? menus : menus.slice(0, 3)).map((m) => <MenuItem key={m} type="button">{m}</MenuItem>)}
        </MenuBar>
        <ToolRow>
          <IconButton type="button" $w={32} aria-label="New"><NewFile /></IconButton>
          <IconButton type="button" aria-label="Open"><OpenFolder /></IconButton>
          <IconButton type="button" aria-label="Explore repository"><ListIcon /></IconButton>
          {full && (
            <>
              <IconButton type="button" aria-label="Save"><Floppy /></IconButton>
              <IconButton type="button" aria-label="Save as"><Floppy star /></IconButton>
              <Perspectives>
                <PerspectiveLabel>Perspective:</PerspectiveLabel>
                <Perspective type="button" $w={111} $on><TransIcon ring />Data Integration</Perspective>
                <Perspective type="button" $w={60}><ModelIcon />Model</Perspective>
                <Perspective type="button" $w={70}><VisualizeIcon />Visualize</Perspective>
                <Perspective type="button" $w={75}><CalendarIcon />Schedule</Perspective>
              </Perspectives>
            </>
          )}
        </ToolRow>
        <Panes>
          <StepsView />
          {full && <Editor />}
        </Panes>
      </Chrome>
    </Frame>
    <TaskBar>
      <StartButton type="button"><WinFlag />start</StartButton>
      {full && (
        <>
          <TaskList>
            <Task type="button"><TaskFolder />Local Disk (D:)</Task>
            <Task type="button"><TaskFolder />presentation</Task>
            <Task type="button"><ChromeIcon />New Tab - Google Ch...</Task>
            <Task type="button"><NotepadIcon />presentation - Notepad</Task>
            <Task type="button" $on><SpoonLogo />Spoon - Transformati...</Task>
            <Task type="button"><PaintIcon />1 - Paint</Task>
          </TaskList>
          <Tray><TrayChevron /><NetIcon /><CardIcon /><ShieldIcon /></Tray>
        </>
      )}
    </TaskBar>
    {full && <ExcelDialog />}
  </Desktop>
);

export default function App() {
  return (
    <>
      <Global />
      <Screen>
        <SpoonDesktop />
        <SpoonDesktop full />
      </Screen>
    </>
  );
}
